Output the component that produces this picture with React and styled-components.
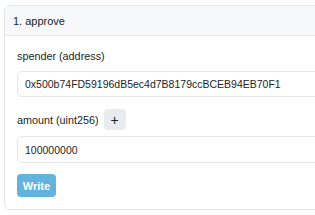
import React from 'react';
import styled, { createGlobalStyle } from 'styled-components';

const GlobalStyle = createGlobalStyle`
    html, body {
        margin: 0;
        padding: 0;
        background: #ffffff;
        overflow: hidden;
    }
    body {
        font-family: "Liberation Sans", Arial, sans-serif;
        font-size: 11px;
        color: #212529;
    }
`;

const Page = styled.div`
    padding: 5px 0 0 4px;
`;

const Card = styled.div`
    width: 340px;
    border: 1px solid #e6e7e9;
    border-radius: 6px;
    background: #ffffff;
    overflow: hidden;
`;

const CardHeader = styled.div`
    height: 29px;
    display: flex;
    align-items: center;
    padding-left: 8px;
    background: #f7f8fa;
    border-bottom: 1px solid #e6e7e9;
    font-size: 11px;
    color: #212529;
`;

const CardBody = styled.div`
    display: flex;
    flex-direction: column;
    padding: 12px;
`;

const Field = styled.div`
    display: flex;
    flex-direction: column;
    gap: ${p => p.gap}px;
    margin-bottom: ${p => p.spacing}px;
`;

const LabelRow = styled.div`
    display: flex;
    align-items: center;
    gap: 5px;
    height: ${p => p.height}px;
`;

const Label = styled.label`
    font-size: 10.8px;
    color: #212529;
`;

const AddButton = styled.button`
    width: 22px;
    height: 21px;
    padding: 0;
    border: none;
    border-radius: 4px;
    background: #e9ecef;
    color: #212529;
    font-family: "Liberation Sans", Arial, sans-serif;
    font-size: 14px;
    line-height: 1;
    display: flex;
    align-items: center;
    justify-content: center;
`;

const Input = styled.input`
    box-sizing: border-box;
    width: 100%;
    height: ${p => p.height}px;
    border: 1px solid #e6e7e9;
    border-radius: 5px;
    padding: 0 7px;
    font-family: "Liberation Sans", Arial, sans-serif;
    font-size: 10.5px;
    color: #212529;
    outline: none;
    background: #ffffff;
`;

const WriteButton = styled.button`
    align-self: flex-start;
    width: 39px;
    height: 23px;
    border: none;
    border-radius: 4px;
    background: #62b3de;
    color: #ffffff;
    font-family: "Liberation Sans", Arial, sans-serif;
    font-size: 11px;
    font-weight: 700;
    padding: 0;
`;

export default function App() {
    return (
        <Page>
            <GlobalStyle />
            <Card>
                <CardHeader>1. approve</CardHeader>
                <CardBody>
                    <Field gap={7} spacing={12}>
                        <LabelRow height={16}>
                            <Label>spender (address)</Label>
                        </LabelRow>
                        <Input height={26} readOnly value="0x500b74FD59196dB5ec4d7B8179ccBCEB94EB70F1" />
                    </Field>
                    <Field gap={6} spacing={11}>
                        <LabelRow height={21}>
                            <Label>amount (uint256)</Label>
                            <AddButton>+</AddButton>
                        </LabelRow>
                        <Input height={27} readOnly value="100000000" />
                    </Field>
                    <WriteButton>Write</WriteButton>
                </CardBody>
            </Card>
        </Page>
    );
}
